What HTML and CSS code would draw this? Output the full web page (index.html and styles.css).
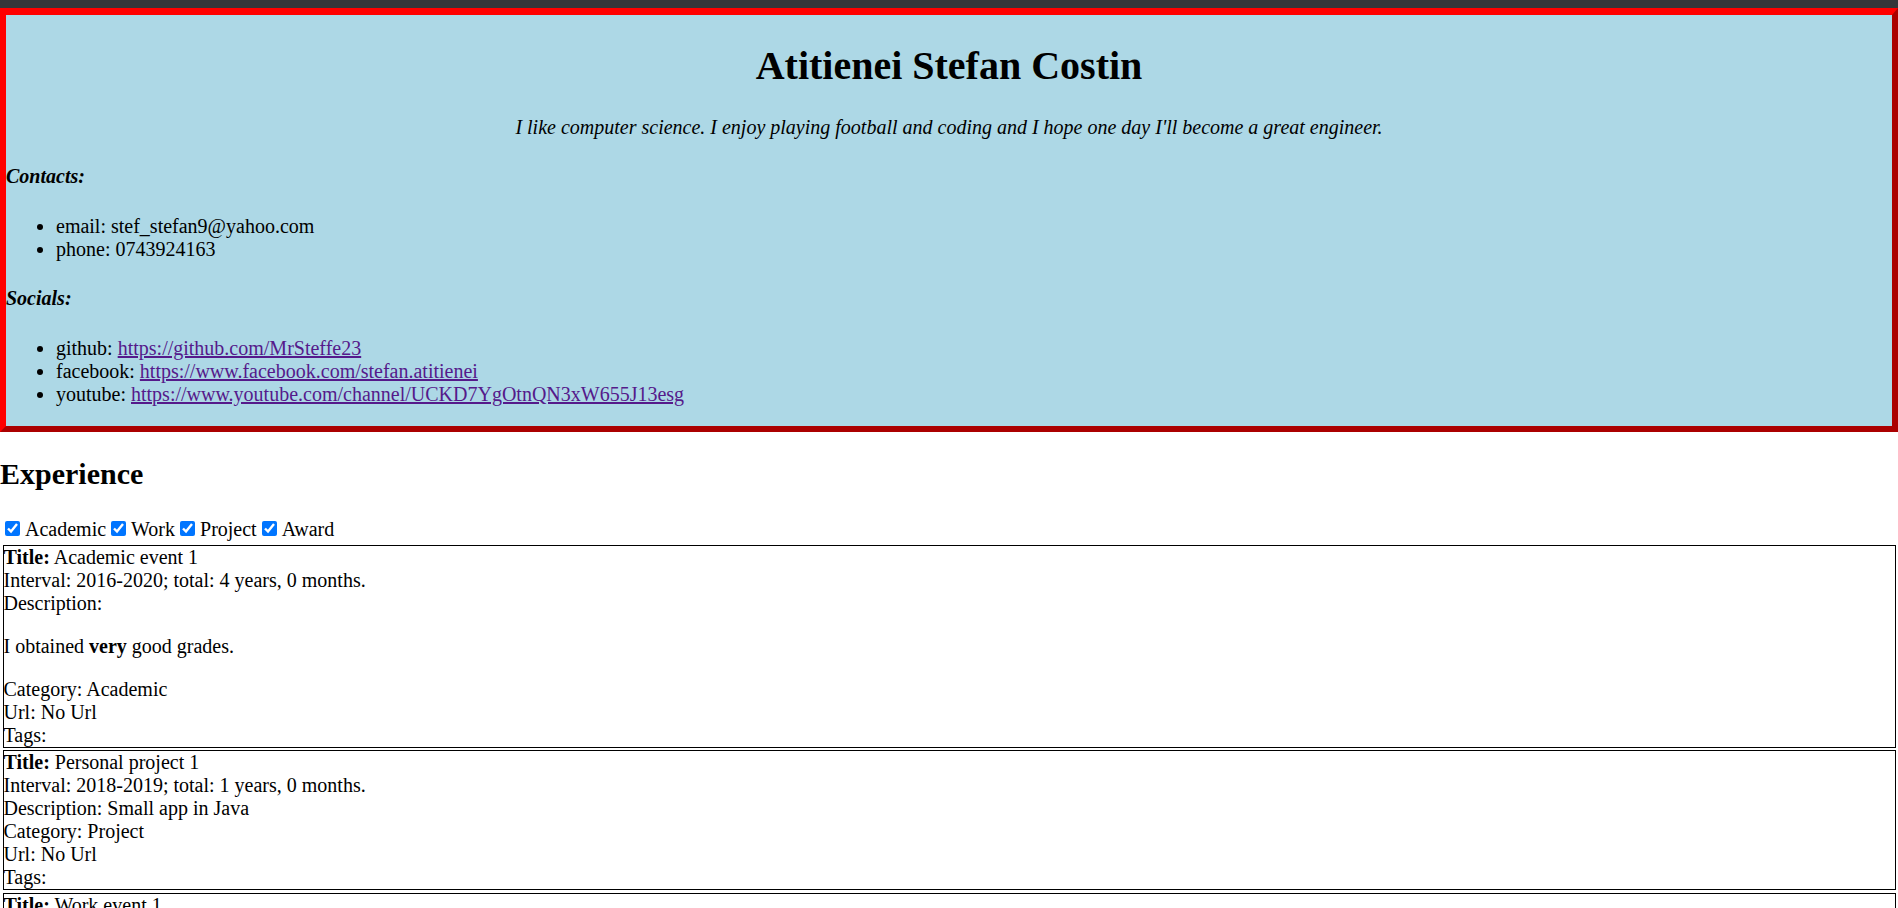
FILE: index.html
```html
<!DOCTYPE html>
<html lang="en">
<head>
<meta charset="utf-8">
<title>Atitienei Stefan Costin</title>
<link rel="stylesheet" href="styles.css">
</head>
<body>
<div class="topbar"></div>
<header class="profile">
  <h1 class="name">Atitienei Stefan Costin</h1>
  <p class="bio">I like computer science. I enjoy playing football and coding and I hope one day I'll become a great engineer.</p>
  <h4 class="section-label">Contacts:</h4>
  <ul class="list">
    <li>email: stef_stefan9@yahoo.com</li>
    <li>phone: 0743924163</li>
  </ul>
  <h4 class="section-label">Socials:</h4>
  <ul class="list">
    <li>github: <a class="link" href="#">https://github.com/MrSteffe23</a></li>
    <li>facebook: <a class="link" href="#">https://www.facebook.com/stefan.atitienei</a></li>
    <li>youtube: <a class="link" href="#">https://www.youtube.com/channel/UCKD7YgOtnQN3xW655J13esg</a></li>
  </ul>
</header>
<h2 class="exp-title">Experience</h2>
<div class="filters"><label class="filter"><input class="check" type="checkbox" checked>Academic</label><label class="filter"><input class="check" type="checkbox" checked>Work</label><label class="filter"><input class="check" type="checkbox" checked>Project</label><label class="filter"><input class="check" type="checkbox" checked>Award</label></div>
<div class="card">
  <div><b>Title:</b> Academic event 1</div>
  <div>Interval: 2016-2020; total: 4 years, 0 months.</div>
  <div>Description: <p class="desc">I obtained <b>very</b> good grades.</p></div>
  <div>Category: Academic</div>
  <div>Url: No Url</div>
  <div>Tags:</div>
</div>
<div class="card">
  <div><b>Title:</b> Personal project 1</div>
  <div>Interval: 2018-2019; total: 1 years, 0 months.</div>
  <div>Description: Small app in Java</div>
  <div>Category: Project</div>
  <div>Url: No Url</div>
  <div>Tags:</div>
</div>
<div class="card">
  <div><b>Title:</b> Work event 1</div>
  <div>Interval: 2019-2020; total: 1 years, 0 months.</div>
  <div>Description: Internship</div>
  <div>Category: Work</div>
  <div>Url: No Url</div>
  <div>Tags:</div>
</div>
</body>
</html>
```
FILE: styles.css
```css
html, body {
  margin: 0;
  padding: 0;
}
body {
  font-family: "Liberation Serif", "Times New Roman", serif;
  font-size: 20px;
  color: #000;
  background: #fff;
}
.topbar {
  height: 8px;
  background: #35363a;
}
.profile {
  background: lightblue;
  border: 6.25px outset red;
  border-top-width: 7px;
}
.name {
  font-size: 40px;
  font-weight: bold;
  text-align: center;
  margin: 26.8px 0;
}
.bio {
  text-align: center;
  font-style: italic;
  margin: 20px 0;
}
.section-label {
  font-size: 20px;
  font-weight: bold;
  font-style: italic;
  margin: 26.6px 0;
}
.list {
  margin: 20px 0;
  padding-left: 50px;
}
.link {
  color: #551a8b;
}
.exp-title {
  font-size: 30px;
  font-weight: bold;
  margin: 24.9px 0;
}
.filters {
  margin: 0;
  line-height: 26.5px;
}
.check {
  width: 15px;
  height: 15px;
  margin: 5px 5px 0 5px;
  vertical-align: top;
}
.card {
  border: 1.25px solid #000;
  margin: 2.5px;
}
.desc {
  margin: 20px 0;
}
```
